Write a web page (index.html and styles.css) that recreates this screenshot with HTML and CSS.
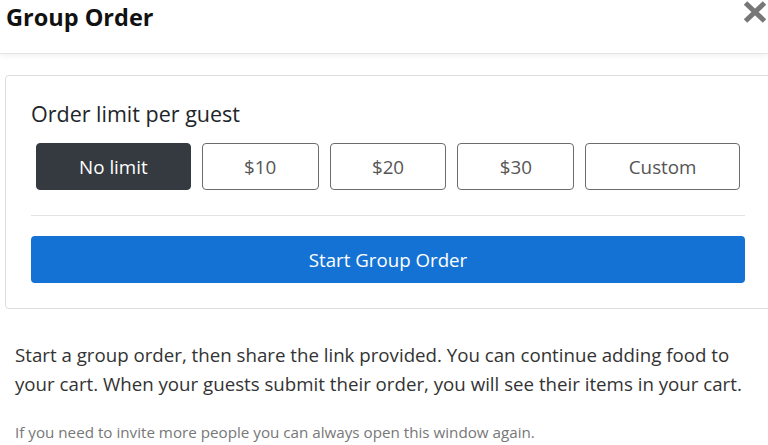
FILE: index.html
```html
<!DOCTYPE html>
<html lang="en">
<head>
<meta charset="utf-8">
<title>Group Order</title>
<link rel="stylesheet" href="styles.css">
</head>
<body>
<div class="modal">
  <header class="modal-header">
    <h1 class="modal-title">Group Order</h1>
    <button class="close" aria-label="Close">
      <svg width="24" height="22" viewBox="0 0 24 22"><path d="M2.5 2 L21.5 20 M21.5 2 L2.5 20" stroke="#777" stroke-width="5" fill="none"/></svg>
    </button>
  </header>
  <section class="card">
    <h2 class="card-title">Order limit per guest</h2>
    <div class="limits">
      <button class="limit active w-wide">No limit</button>
      <button class="limit w-narrow">$10</button>
      <button class="limit w-narrow">$20</button>
      <button class="limit w-narrow">$30</button>
      <button class="limit w-wide">Custom</button>
    </div>
    <hr class="divider">
    <button class="start">Start Group Order</button>
  </section>
  <p class="info">Start a group order, then share the link provided. You can continue adding food to your cart. When your guests submit their order, you will see their items in your cart.</p>
  <p class="note">If you need to invite more people you can always open this window again.</p>
</div>
</body>
</html>
```
FILE: styles.css
```css
html, body {
  margin: 0;
  padding: 0;
  background: #fff;
  overflow: hidden;
}
body {
  width: 768px;
  height: 445px;
  font-family: "Open Sans", "Noto Sans", "Liberation Sans", sans-serif;
  color: #212529;
}
.modal {
  width: 768px;
}
.modal-header {
  height: 53px;
  display: flex;
  justify-content: space-between;
  align-items: flex-start;
  border-bottom: 1px solid #e4e4e4;
  box-shadow: 0 2px 5px rgba(0, 0, 0, 0.06);
  padding: 0 1px 0 6px;
}
.modal-title {
  margin: 0;
  padding-top: 1px;
  font-size: 23.5px;
  font-weight: 700;
  line-height: 32px;
  color: #111;
}
.close {
  border: 0;
  background: none;
  padding: 0;
  margin-top: 1px;
  width: 24px;
  height: 22px;
  display: block;
}
.close svg { display: block; }
.card {
  margin: 21px 0 0 5px;
  border: 1px solid #dedede;
  border-radius: 4px;
  padding: 25px 25px 25px 25px;
  box-sizing: border-box;
  width: 766px;
}
.card-title {
  margin: 0 0 16px 0;
  font-size: 21.5px;
  font-weight: 500;
  line-height: 26px;
  color: #212529;
}
.limits {
  display: flex;
  gap: 11px;
  padding: 0 5px;
  width: 714px;
  box-sizing: border-box;
}
.limit {
  height: 47px;
  font-family: inherit;
  font-size: 18.8px;
  color: #555;
  background: #fff;
  border: 1px solid #6c6c6c;
  border-radius: 4px;
  padding: 0;
}
.w-wide { width: 155px; }
.w-narrow { width: 117px; }
.limit.active {
  background: #343a40;
  border-color: #343a40;
  color: #fff;
}
.divider {
  margin: 25px 0 20px 0;
  width: 714px;
  border: 0;
  border-top: 1px solid #e3e3e3;
}
.start {
  display: block;
  width: 714px;
  height: 47px;
  background: #1472d4;
  border: 0;
  border-radius: 4px;
  color: #fff;
  font-family: inherit;
  font-size: 18.7px;
}
.info {
  margin: 31px 0 0 15px;
  font-size: 18.7px;
  line-height: 29px;
  color: #333;
  width: 745px;
}
.note {
  margin: 24px 0 0 15px;
  font-size: 15.2px;
  line-height: 20px;
  color: #777;
}
```
